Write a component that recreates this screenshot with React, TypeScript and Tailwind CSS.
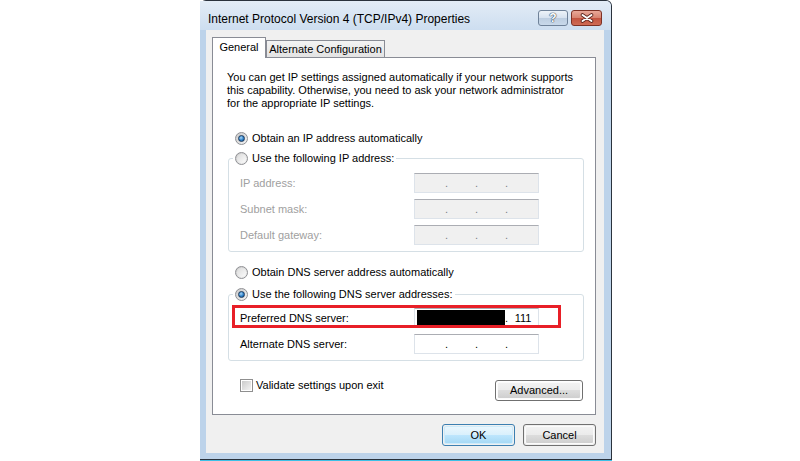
import React from "react";

const FONT = "font-['Liberation_Sans',Arial,sans-serif]";

function Radio({ checked = false }: { checked?: boolean }) {
  return (
    <span className="flex h-[13px] w-[13px] shrink-0 items-center justify-center rounded-full border border-[#8f9094] bg-[linear-gradient(135deg,#c9c9c9,#f5f5f5)]">
      {checked ? (
        <span className="h-[7px] w-[7px] rounded-full border border-[#1d3a5c] bg-[radial-gradient(circle_at_40%_35%,#a8d6f7_0%,#2c7fc8_55%,#0c477f_100%)]" />
      ) : (
        <span className="h-[9px] w-[9px] rounded-full bg-[linear-gradient(135deg,#dcdcdc,#fbfbfb)]" />
      )}
    </span>
  );
}

function Checkbox() {
  return (
    <span className="flex h-[13px] w-[13px] shrink-0 items-center justify-center border border-[#8f8f8f] bg-white">
      <span className="h-[9px] w-[9px] bg-[linear-gradient(135deg,#cbcbcb,#f3f3f3)]" />
    </span>
  );
}

function IpBox({ disabled = false, masked = false }: { disabled?: boolean; masked?: boolean }) {
  const dot = disabled ? "text-[#7a7f86]" : "text-black";
  return (
    <div
      className={`flex h-[20px] w-[125px] shrink-0 items-center border border-[#dde3ea] border-t-[#abadb3] ${
        disabled ? "bg-[#f0f0f0]" : "bg-white"
      }`}
    >
      {masked ? (
        <>
          <span className="ml-[2px] h-[16px] w-[88px] bg-black" />
          <span className="w-[3px] text-center">.</span>
          <span className="flex-1 text-center">111</span>
        </>
      ) : (
        <>
          <span className="w-[30px]" />
          <span className={`w-[3px] text-center ${dot}`}>.</span>
          <span className="w-[27px]" />
          <span className={`w-[3px] text-center ${dot}`}>.</span>
          <span className="w-[27px]" />
          <span className={`w-[3px] text-center ${dot}`}>.</span>
          <span className="flex-1" />
        </>
      )}
    </div>
  );
}

function Button({ label, width, primary = false }: { label: string; width: string; primary?: boolean }) {
  return (
    <div
      className={`flex shrink-0 rounded-[3px] border p-px ${width} ${
        primary ? "border-[#3c7fb1]" : "border-[#707070]"
      }`}
    >
      <div
        className={`flex flex-1 items-center justify-center rounded-[2px] border ${
          primary
            ? "border-[#cdebfb] bg-[linear-gradient(180deg,#eaf6fd_0%,#d9f0fc_50%,#bee6fd_50%,#a7d9f5_100%)]"
            : "border-[#fbfbfb] bg-[linear-gradient(180deg,#f2f2f2_0%,#ebebeb_50%,#dddddd_50%,#cfcfcf_100%)]"
        }`}
      >
        {label}
      </div>
    </div>
  );
}

export default function App() {
  return (
    <div className={`min-h-screen w-full bg-white ${FONT} text-[11px] leading-[13px] text-black`}>
      <div className="ml-[200px] w-[412px]">
        <div className="flex h-[460px] flex-col rounded-t-[6px] border-t border-r border-b border-[#2a323c] bg-[#bdd3ea]">
          {/* title bar */}
          <div className="flex h-[29px] shrink-0 items-start rounded-tr-[5px] bg-[linear-gradient(180deg,#e3ecf6,#cddef0)] pl-[8px] pr-[9px]">
            <span className="mt-[11px] text-[12px] leading-[14px]">Internet Protocol Version 4 (TCP/IPv4) Properties</span>
            <div className="ml-auto mt-[9px] flex gap-[3px]">
              <div className="flex h-[16px] w-[30px] items-center justify-center rounded-[3px] border border-[#6f8299] bg-[linear-gradient(180deg,#eef3f9_0%,#d6e2ef_50%,#bccde0_50%,#c9d9ea_100%)]">
                <span className="text-[12px] font-bold leading-[12px] text-white [text-shadow:0_0_1px_#34465c,0_0_1px_#34465c,0_0_1px_#34465c]">
                  ?
                </span>
              </div>
              <div className="flex h-[16px] w-[31px] items-center justify-center rounded-[3px] border border-[#7d3125] bg-[linear-gradient(180deg,#e9a999_0%,#d7826f_50%,#c2533f_50%,#cf6b55_100%)]">
                <svg width="14" height="10" viewBox="0 0 14 10">
                  <path d="M2.5 2 L11.5 8 M2.5 8 L11.5 2" stroke="#5a221a" strokeWidth="3.6" strokeLinecap="round" />
                  <path d="M2.5 2 L11.5 8 M2.5 8 L11.5 2" stroke="#ffffff" strokeWidth="2" strokeLinecap="round" />
                </svg>
              </div>
            </div>
          </div>

          {/* client area */}
          <div className="mb-[6px] ml-[6px] mr-[7px] flex flex-1 flex-col bg-[#f0f0f0] pb-[7px] pl-[6px] pr-[8px] pt-[7px]">
            {/* tabs */}
            <div className="flex h-[20px] items-end">
              <div className="relative z-10 -mb-px flex h-[21px] w-[54px] items-center justify-center border border-b-0 border-[#898c95] bg-white pb-[2px]">
                General
              </div>
              <div className="flex h-[17px] w-[119px] items-center justify-center border border-b-0 border-[#898c95] bg-[linear-gradient(180deg,#f3f3f3,#e3e3e3)]">
                Alternate Configuration
              </div>
            </div>

            {/* tab panel */}
            <div className="flex h-[358px] flex-col border border-[#898c95] bg-white">
              <p className="ml-[14px] mt-[13px] whitespace-nowrap">
                You can get IP settings assigned automatically if your network supports
                <br />
                this capability. Otherwise, you need to ask your network administrator
                <br />
                for the appropriate IP settings.
              </p>

              <div className="ml-[22px] mt-[20px] flex h-[16px] items-center gap-[4px]">
                <Radio checked />
                <span>Obtain an IP address automatically</span>
              </div>

              <fieldset className="ml-[15px] mt-[4px] w-[356px] rounded-[3px] border border-[#d5dfe5] pb-[6px]">
                <legend className="ml-[4px] px-[2px]">
                  <div className="flex h-[16px] items-center gap-[4px]">
                    <Radio />
                    <span>Use the following IP address:</span>
                  </div>
                </legend>
                <div className="mt-[7px] flex h-[20px] items-center pl-[11px]">
                  <span className="w-[174px] text-[#a0a0a0]">IP address:</span>
                  <IpBox disabled />
                </div>
                <div className="mt-[6px] flex h-[20px] items-center pl-[11px]">
                  <span className="w-[174px] text-[#a0a0a0]">Subnet mask:</span>
                  <IpBox disabled />
                </div>
                <div className="mt-[6px] flex h-[20px] items-center pl-[11px]">
                  <span className="w-[174px] text-[#a0a0a0]">Default gateway:</span>
                  <IpBox disabled />
                </div>
              </fieldset>

              <div className="ml-[22px] mt-[12px] flex h-[16px] items-center gap-[4px]">
                <Radio />
                <span>Obtain DNS server address automatically</span>
              </div>

              <fieldset className="ml-[15px] mt-[6px] w-[356px] rounded-[3px] border border-[#d5dfe5] pb-[6px]">
                <legend className="ml-[4px] px-[2px]">
                  <div className="flex h-[16px] items-center gap-[4px]">
                    <Radio checked />
                    <span>Use the following DNS server addresses:</span>
                  </div>
                </legend>
                <div className="relative mt-[6px] flex h-[20px] items-center pl-[11px]">
                  <span className="w-[174px]">Preferred DNS server:</span>
                  <IpBox masked />
                  <div className="absolute left-[3px] top-[-3px] h-[23px] w-[329px] border-[3px] border-[#e81f27]" />
                </div>
                <div className="mt-[6px] flex h-[20px] items-center pl-[11px]">
                  <span className="w-[174px]">Alternate DNS server:</span>
                  <IpBox />
                </div>
              </fieldset>

              <div className="ml-[27px] mr-[12px] mt-[19px] flex h-[21px] items-start justify-between">
                <div className="-mt-px flex h-[13px] items-center gap-[3px]">
                  <Checkbox />
                  <span>Validate settings upon exit</span>
                </div>
                <Button label="Advanced..." width="w-[88px] h-[21px]" />
              </div>
            </div>

            {/* footer buttons */}
            <div className="mt-[9px] flex justify-end gap-[8px]">
              <Button label="OK" width="w-[73px] h-[22px]" primary />
              <Button label="Cancel" width="w-[73px] h-[22px]" />
            </div>
          </div>
        </div>
        <div className="h-px w-[412px] bg-[#3cc0e6]" />
      </div>
    </div>
  );
}
